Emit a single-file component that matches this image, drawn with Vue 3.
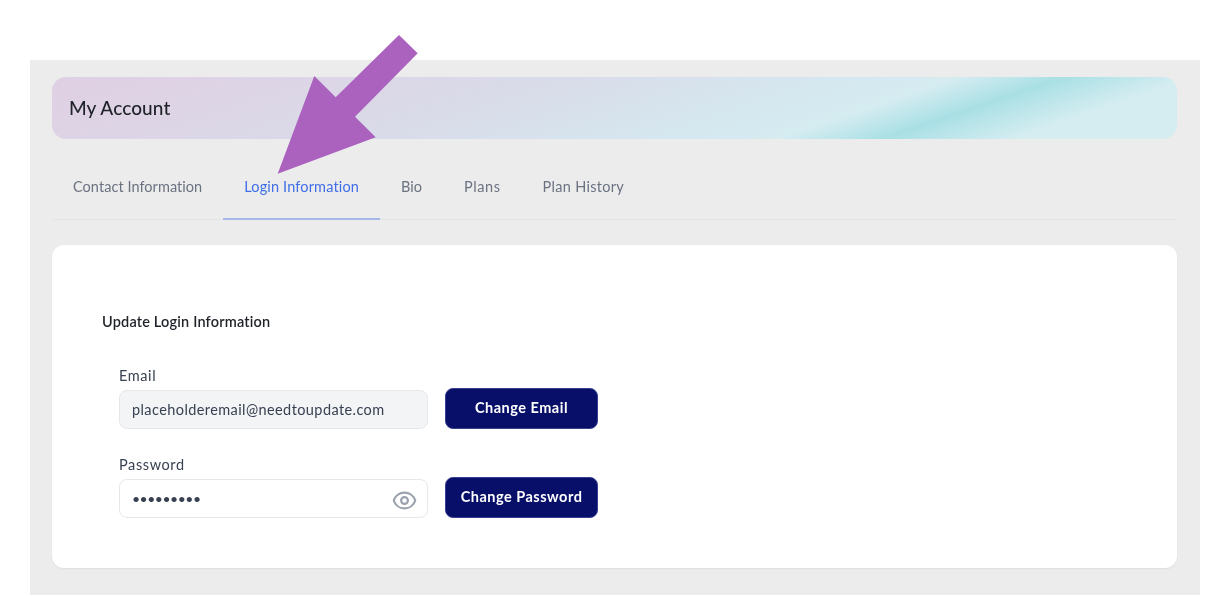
<script setup>
const tabs = [
  { label: 'Contact Information', active: false },
  { label: 'Login Information', active: true },
  { label: 'Bio', active: false },
  { label: 'Plans', active: false },
  { label: 'Plan History', active: false },
]
</script>

<template>
  <div class="page">
    <main class="panel">
      <header class="banner"><h1>My Account</h1></header>
      <nav class="tabs">
        <a v-for="t in tabs" :key="t.label" class="tab" :class="{ active: t.active }">{{ t.label }}</a>
      </nav>
      <section class="card">
        <h2>Update Login Information</h2>
        <div class="field">
          <label>Email</label>
          <div class="row">
            <div class="input disabled">placeholderemail@needtoupdate.com</div>
            <button>Change Email</button>
          </div>
        </div>
        <div class="field second">
          <label>Password</label>
          <div class="row">
            <div class="input pw">
              <span class="dots">•••••••••</span>
              <svg class="eye" viewBox="0 0 24 24" fill="none" stroke="#9ca3af" stroke-width="2" stroke-linecap="round" stroke-linejoin="round">
                <path d="M15 12a3 3 0 11-6 0 3 3 0 016 0z" />
                <path d="M2.458 12C3.732 7.943 7.523 5 12 5c4.478 0 8.268 2.943 9.542 7-1.274 4.057-5.064 7-9.542 7-4.477 0-8.268-2.943-9.542-7z" />
              </svg>
            </div>
            <button>Change Password</button>
          </div>
        </div>
      </section>
    </main>
    <svg class="arrow" width="420" height="180" viewBox="0 0 420 180">
      <polygon points="277.7,173.7 314.3,76 335.7,97.3 399,35 417.7,53.3 355,116.7 375.7,137.3" fill="#ab62bf" />
    </svg>
  </div>
</template>

<style scoped>
.page {
  position: relative;
  height: 596px;
  padding: 60px 16px 1px 30px;
  box-sizing: border-box;
  font-family: "Lato", "Open Sans", sans-serif;
  background: #fff;
  overflow: hidden;
  filter: blur(0.3px);
}
.panel {
  height: 535px;
  box-sizing: border-box;
  background: #ececec;
  padding: 17px 23px 0 22px;
}
.banner {
  height: 62px;
  border-radius: 14px;
  display: flex;
  align-items: center;
  padding: 0 0 2px 17px;
  box-sizing: border-box;
  background: linear-gradient(161deg, #e0cfe3 0%, #d9dbe8 38%, #d5e7ef 60%, #d5ecf1 69.5%, #a9e0e5 77.5%, #d5edf1 87.5%, #d5edf1 100%);
}
h1 {
  margin: 0;
  font-size: 19px;
  font-weight: 500;
  letter-spacing: 0.1px;
  color: #1f2228;
}
.tabs {
  display: flex;
  height: 81px;
  box-sizing: border-box;
  border-bottom: 1px solid #e2e4e6;
  margin-bottom: 25px;
}
.tab {
  display: flex;
  align-items: center;
  padding: 16px 21px 0;
  height: 81px;
  box-sizing: border-box;
  margin-bottom: -1px;
  font-size: 14.5px;
  letter-spacing: 0.05px;
  color: #6b7280;
  border-bottom: 2px solid transparent;
}
.tab:nth-child(2) {
  letter-spacing: 0.15px;
}
.tab:nth-child(4) {
  letter-spacing: 0.55px;
}
.tab:nth-child(5) {
  letter-spacing: 0.3px;
}
.tab.active {
  color: #3f6ee8;
  border-bottom-color: #a6b8ea;
}
.card {
  height: 323px;
  box-sizing: border-box;
  background: #fff;
  border-radius: 12px;
  box-shadow: 0 1px 2px rgba(0, 0, 0, 0.06);
  padding: 68px 0 0 50px;
}
h2 {
  margin: 0 0 37px;
  font-size: 14.5px;
  line-height: 17px;
  font-weight: 600;
  letter-spacing: 0.18px;
  color: #1f2329;
}
.field {
  padding-left: 17px;
}
.second {
  margin-top: 27px;
}
label {
  display: block;
  font-size: 14.5px;
  line-height: 17px;
  letter-spacing: 0.6px;
  color: #374151;
  margin-bottom: 6px;
}
.row {
  display: flex;
  align-items: flex-end;
  gap: 17px;
}
.input {
  width: 309px;
  height: 39px;
  box-sizing: border-box;
  display: flex;
  align-items: center;
  padding-left: 12px;
  border: 1px solid #e5e7eb;
  border-radius: 8px;
  background: #fff;
  font-size: 14.5px;
  letter-spacing: 0.41px;
  color: #374151;
}
.disabled {
  background: #f3f4f6;
}
.pw {
  position: relative;
}
.dots {
  font-size: 14px;
  letter-spacing: -0.5px;
  color: #374151;
}
.eye {
  position: absolute;
  right: 9px;
  top: 6.5px;
  width: 27px;
  height: 27px;
}
button {
  width: 153px;
  height: 41px;
  border: 1px solid #3a4090;
  border-radius: 8px;
  background: #070f69;
  color: #fff;
  font-family: inherit;
  font-size: 14.5px;
  font-weight: 700;
  letter-spacing: 0.5px;
  padding: 0 0 2px;
  margin-top: -2px;
}
.arrow {
  position: absolute;
  left: 0;
  top: 0;
  pointer-events: none;
}
</style>
